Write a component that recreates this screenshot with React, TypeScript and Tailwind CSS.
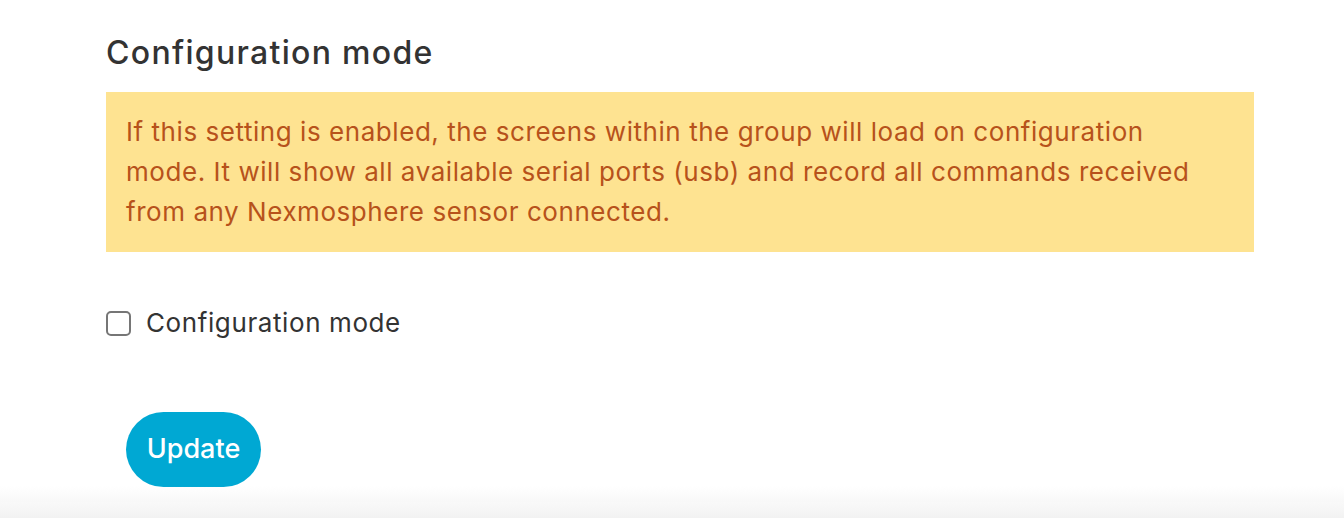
import React from "react";

export default function App() {
  return (
    <div
      className="min-h-[518px] bg-white pl-[106px] pt-[34px]"
      style={{ fontFamily: "Inter, 'Noto Sans', sans-serif" }}
    >
      <h2 className="text-[32px] leading-[38px] font-medium tracking-[1.3px] text-[#333333]">Configuration mode</h2>
      <div className="mt-[20px] w-[1148px] bg-[#fee391] pl-[20px] pr-[50px] py-[20px] text-[26px] leading-[40px] tracking-[0.55px] text-[#b7521b]">
        If this setting is enabled, the screens within the group will load on configuration mode. It will show all
        available serial ports (usb) and record all commands received from any Nexmosphere sensor connected.
      </div>
      <label className="mt-[55px] flex items-center gap-[15px] text-[26px] leading-[32px] tracking-[0.6px] text-[#333333]">
        <span className="h-[25px] w-[25px] rounded-[5px] border-2 border-[#767676] bg-white" />
        Configuration mode
      </label>
      <div className="mt-[73px] pl-[20px]">
        <button className="flex h-[75px] w-[135px] items-center justify-center rounded-full bg-[#00a8d3] text-[27px] font-medium text-white">
          Update
        </button>
      </div>
      <div className="pointer-events-none fixed bottom-0 left-0 right-0 h-[32px] bg-gradient-to-b from-white/0 to-[#f2f2f2]" />
    </div>
  );
}
